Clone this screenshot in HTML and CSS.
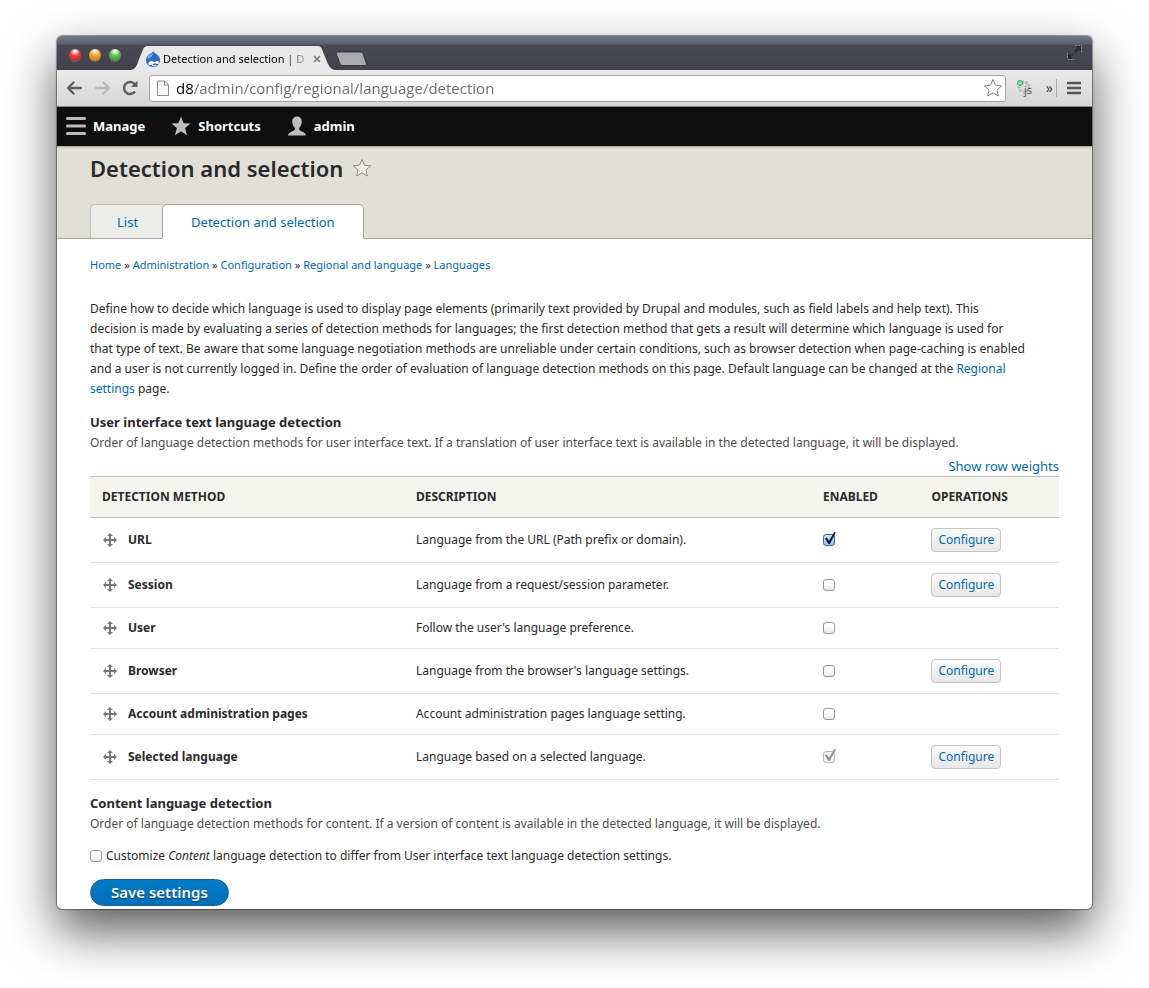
FILE: index.html
```html
<!DOCTYPE html>
<html lang="en">
<head>
  <meta charset="UTF-8">
  <title>Detection and selection | Drupal</title>
  <link rel="stylesheet" href="styles.css">
</head>
<body>
  <svg width="0" height="0" class="defs" aria-hidden="true">
    <symbol id="drag" viewBox="0 0 14 14">
      <path d="M7 0l3 3H8v3h3V4l3 3-3 3V8H8v3h2l-3 3-3-3h2V8H3v2L0 7l3-3v2h3V3H4z" fill="#787878"/>
    </symbol>
    <symbol id="star" viewBox="0 0 20 20">
      <path d="M10 1.500l2.500 5.700 6.200.6-4.700 4.100 1.400 6.100-5.400-3.200-5.400 3.200 1.400-6.100-4.700-4.100 6.200-.6z" stroke-linejoin="round"/>
    </symbol>
  </svg>

  <div class="window">
    <div class="titlebar">
      <div class="lights">
        <span class="light red"></span>
        <span class="light yellow"></span>
        <span class="light green"></span>
      </div>
      <div class="browser-tab">
        <svg class="tab-shape" viewBox="0 0 207 24" preserveAspectRatio="none">
          <path d="M0 24c4-1 6-4 7-8l5-12c1-3 3-4 5-4h172c3 0 4 1 5 4l5 12c2 4 3 7 8 8z" fill="#e9e9e9"/>
        </svg>
        <svg class="favicon" width="16" height="16" viewBox="0 0 16 16">
          <path d="M8 0c1 2 3 2.500 4.500 4C14.500 5.500 15 7.500 15 9.500 15 13 12 16 8 16S1 13 1 9.500C1 7 2 5 4 3.500 6 2.500 7.500 2 8 0z" fill="#2d6cc0"/>
          <path d="M3 5c2-2 4-1 5-3-.5 3-2 4-5 6z" fill="#86b4e8"/>
          <path d="M5 10.500c2.500-1.500 3.500 1 5 .5 2-1.500 4-1.500 4 .5s-2.500 2-4 .5c-1.500 1.500-5 3-6.500 1.500-.7-1 .5-2.400 1.500-3z" fill="#fff"/>
          <path d="M7 14.200c1.500.8 3 .8 4 0" stroke="#fff" fill="none"/>
        </svg>
        <span class="tab-title">Detection and selection | D</span>
        <button class="tab-close" aria-label="Close tab">
          <svg width="8" height="8" viewBox="0 0 8 8"><path d="M1 1l6 6M7 1L1 7" stroke="#777" stroke-width="1.500"/></svg>
        </button>
      </div>
      <svg class="new-tab" width="32" height="16" viewBox="0 0 32 16">
        <path d="M3 1h22c2 0 2.500.6 3.200 2l3 9c.5 1.600.2 2.500-1.500 2.500H8c-2 0-2.500-.8-3.200-2.300L1.500 3.400C1 2 1.500 1 3 1z" fill="#a9abb0" stroke="#34353d"/>
      </svg>
      <svg class="fullscreen" width="16" height="16" viewBox="0 0 16 16">
        <path d="M8 1h6v6l-2-2-3 3-2-2 3-3zM1 8l2 2 3-2 1 2-3 2 2 2H1z" fill="#2a2b33"/>
        <path d="M8 .5h7M14.500 2v6M1 14.500h7M.5 8v6" stroke="#8b8d97" stroke-dasharray="2 1"/>
      </svg>
    </div>

    <div class="toolbar">
      <button class="nav-btn" aria-label="Back">
        <svg width="17" height="14" viewBox="0 0 17 14"><path d="M7.500 1.500L2 7l5.500 5.500M2 7h13" stroke="#5f5f5f" stroke-width="2.300" stroke-linecap="round" stroke-linejoin="round" fill="none"/></svg>
      </button>
      <button class="nav-btn" aria-label="Forward">
        <svg width="17" height="14" viewBox="0 0 17 14"><path d="M9.500 1.500L15 7l-5.500 5.500M15 7H2" stroke="#b9b9b9" stroke-width="2.300" stroke-linecap="round" stroke-linejoin="round" fill="none"/></svg>
      </button>
      <button class="nav-btn" aria-label="Reload">
        <svg width="16" height="16" viewBox="0 0 16 16"><path d="M13 11.500A6 6 0 1 1 13 4.500" stroke="#5f5f5f" stroke-width="2.500" fill="none"/><path d="M15.500.5V7H9z" fill="#5f5f5f"/></svg>
      </button>
      <div class="omnibox">
        <svg width="12" height="16" viewBox="0 0 12 16"><path d="M.5 1h7l4 4v10.500H.5zM7.500 1v4h4" fill="#f6f6f6" stroke="#8d8d8d"/></svg>
        <input class="url" type="text" aria-label="Address" value="d8/admin/config/regional/language/detection">
        <svg class="bookmark" width="20" height="20"><use href="#star"/></svg>
      </div>
      <svg class="extension" width="18" height="18" viewBox="0 0 18 18">
        <circle cx="8" cy="8" r="5" fill="#dcdcdc" stroke="#b9b9b9" stroke-width="3" stroke-dasharray="2 1.500"/>
        <circle cx="4" cy="4" r="2.500" fill="#8be3a5" stroke="#1fb455"/>
        <text x="8" y="15">js</text>
      </svg>
      <span class="more">»</span>
      <span class="divider"></span>
      <button class="nav-btn" aria-label="Menu">
        <svg width="14" height="14" viewBox="0 0 14 14"><path d="M1 2h12M1 7h12M1 12h12" stroke="#555" stroke-width="2.600" stroke-linecap="round"/></svg>
      </button>
    </div>

    <nav class="admin-bar">
      <a href="#">
        <svg width="20" height="20" viewBox="0 0 20 20"><path d="M1.500 2.500h17M1.500 10h17M1.500 17.500h17" stroke="#bebebe" stroke-width="3" stroke-linecap="round"/></svg>
        Manage
      </a>
      <a href="#">
        <svg width="20" height="20" viewBox="0 0 20 20"><path d="M10 .5l2.600 6.800 6.900.3-5.400 4.500 1.900 7.200-6-4-6 4 1.900-7.200L.5 7.600l6.900-.3z" fill="#bebebe"/></svg>
        Shortcuts
      </a>
      <a href="#">
        <svg width="20" height="20" viewBox="0 0 20 20"><path d="M10 .5c3 0 4.800 2 4.800 5 0 2.500-1 4.500-2.300 6-.8 1.200-.5 2.500.8 3.200 2.500 1.200 5 1.600 5.700 4.800H1c.7-3.200 3.200-3.600 5.700-4.800 1.300-.7 1.600-2 .8-3.200-1.300-1.500-2.300-3.500-2.300-6 0-3 1.800-5 4.800-5z" fill="#bebebe"/></svg>
        admin
      </a>
    </nav>

    <header class="page-header">
      <div class="title-row">
        <h1>Detection and selection</h1>
        <svg class="shortcut-star" width="20" height="20"><use href="#star"/></svg>
      </div>
      <ul class="tabs">
        <li><a href="#">List</a></li>
        <li class="active"><a href="#">Detection and selection</a></li>
      </ul>
    </header>

    <main>
      <nav class="breadcrumb">
        <a href="#">Home</a> » <a href="#">Administration</a> » <a href="#">Configuration</a> » <a href="#">Regional and language</a> » <a href="#">Languages</a>
      </nav>

      <p class="help">Define how to decide which language is used to display page elements (primarily text provided by Drupal and modules, such as field labels and help text). This decision is made by evaluating a series of detection methods for languages; the first detection method that gets a result will determine which language is used for that type of text. Be aware that some language negotiation methods are unreliable under certain conditions, such as browser detection when page-caching is enabled and a user is not currently logged in. Define the order of evaluation of language detection methods on this page. Default language can be changed at the <a href="#">Regional settings</a> page.</p>

      <form>
        <h2>User interface text language detection</h2>
        <p class="description">Order of language detection methods for user interface text. If a translation of user interface text is available in the detected language, it will be displayed.</p>
        <div class="weights"><a href="#">Show row weights</a></div>

        <table>
          <thead>
            <tr>
              <th class="col-method">Detection method</th>
              <th class="col-desc">Description</th>
              <th class="col-enabled">Enabled</th>
              <th>Operations</th>
            </tr>
          </thead>
          <tbody>
            <tr>
              <td><label class="method" for="m-url"><svg width="14" height="14"><use href="#drag"/></svg>URL</label></td>
              <td>Language from the URL (Path prefix or domain).</td>
              <td><input type="checkbox" id="m-url" checked></td>
              <td><a class="configure" href="#">Configure</a></td>
            </tr>
            <tr>
              <td><label class="method" for="m-session"><svg width="14" height="14"><use href="#drag"/></svg>Session</label></td>
              <td>Language from a request/session parameter.</td>
              <td><input type="checkbox" id="m-session"></td>
              <td><a class="configure" href="#">Configure</a></td>
            </tr>
            <tr>
              <td><label class="method" for="m-user"><svg width="14" height="14"><use href="#drag"/></svg>User</label></td>
              <td>Follow the user's language preference.</td>
              <td><input type="checkbox" id="m-user"></td>
              <td></td>
            </tr>
            <tr>
              <td><label class="method" for="m-browser"><svg width="14" height="14"><use href="#drag"/></svg>Browser</label></td>
              <td>Language from the browser's language settings.</td>
              <td><input type="checkbox" id="m-browser"></td>
              <td><a class="configure" href="#">Configure</a></td>
            </tr>
            <tr>
              <td><label class="method" for="m-account"><svg width="14" height="14"><use href="#drag"/></svg>Account administration pages</label></td>
              <td>Account administration pages language setting.</td>
              <td><input type="checkbox" id="m-account"></td>
              <td></td>
            </tr>
            <tr>
              <td><label class="method" for="m-selected"><svg width="14" height="14"><use href="#drag"/></svg>Selected language</label></td>
              <td>Language based on a selected language.</td>
              <td><input type="checkbox" id="m-selected" checked disabled></td>
              <td><a class="configure" href="#">Configure</a></td>
            </tr>
          </tbody>
        </table>

        <h2>Content language detection</h2>
        <p class="description">Order of language detection methods for content. If a version of content is available in the detected language, it will be displayed.</p>
        <div class="customize">
          <input type="checkbox" id="customize">
          <label for="customize">Customize <em>Content</em> language detection to differ from User interface text language detection settings.</label>
        </div>
        <button class="save" type="button">Save settings</button>
      </form>
    </main>
  </div>
</body>
</html>
```

FILE: styles.css
```css
* {
  box-sizing: border-box;
}

body {
  margin: 0;
  padding: 36px 57px 78px;
  background: #fff;
  color: #2a2a2a;
  font-family: "Noto Sans", "Open Sans", sans-serif;
  font-size: 12px;
  line-height: 20px;
}

a {
  color: #0068b4;
  text-decoration: none;
}

button {
  font-family: inherit;
  border: none;
  background: none;
  padding: 0;
}

svg {
  display: block;
  flex: none;
}

.defs {
  position: absolute;
}

.window {
  border-radius: 5px;
  overflow: hidden;
  background: #fff;
  box-shadow: 0 0 1px 1px rgba(0,0,0,0.4), 0 22px 50px rgba(0,0,0,0.65);
}

/* browser chrome */
.titlebar {
  display: flex;
  align-items: flex-end;
  height: 34px;
  background: linear-gradient(#737789, #5b5e6d 8px, #484955 9px, #41424d);
}

.lights {
  display: flex;
  gap: 8px;
  align-self: center;
  padding: 4px 10px 0 12px;
}

.light {
  width: 12px;
  height: 12px;
  border-radius: 50%;
  box-shadow: 0 1px 0 #6a6c78;
}

.red {
  background: radial-gradient(circle at 50% 20%, #fff 5%, #ee3f45 40%, #b41a22);
}

.yellow {
  background: radial-gradient(circle at 50% 20%, #fff 5%, #f7a52c 40%, #c66a10);
}

.green {
  background: radial-gradient(circle at 50% 20%, #fff 5%, #61c453 40%, #2a8c2a);
}

.browser-tab {
  position: relative;
  display: flex;
  align-items: center;
  width: 204px;
  height: 24px;
  padding: 2px 12px 0 14px;
}

.tab-shape {
  position: absolute;
  inset: 0;
  width: 100%;
  height: 100%;
}

.favicon, .tab-title, .tab-close {
  position: relative;
}

.tab-title {
  flex: 1;
  margin-left: 2px;
  white-space: nowrap;
  font-size: 11px;
  color: #000;
  -webkit-mask-image: linear-gradient(to right, #000 120px, transparent 150px);
  mask-image: linear-gradient(to right, #000 120px, transparent 150px);
}

.tab-close {
  margin: 0 2px 0 6px;
}

.new-tab {
  margin-bottom: 3px;
}

.fullscreen {
  margin: 0 9px 0 auto;
  align-self: center;
}

.toolbar {
  display: flex;
  align-items: center;
  height: 37px;
  padding: 0 11px 0 9px;
  background: linear-gradient(#e9e9e9, #d6d6d6);
  border-bottom: 1px solid #8a8a8a;
}

.nav-btn {
  margin-right: 11px;
}

.nav-btn:last-child {
  margin-right: 0;
}

.omnibox {
  display: flex;
  flex: 1;
  align-items: center;
  height: 27px;
  padding: 0 2px 0 7px;
  background: #fff;
  border: 1px solid #a4a4a4;
  border-radius: 3px;
}

.url {
  flex: 1;
  min-width: 0;
  margin-left: 7px;
  padding: 0;
  border: none;
  outline: none;
  font-family: "Open Sans", "Noto Sans", sans-serif;
  font-size: 15px;
  /* host part dark, path grey */
  background: linear-gradient(to right, #000 18px, #6a6a6a 18px);
  -webkit-background-clip: text;
  background-clip: text;
  color: transparent;
}

.bookmark {
  fill: #fff;
  stroke: #858585;
}

.extension {
  margin-left: 10px;
}

.extension text {
  font-size: 11px;
  fill: #555;
}

.more {
  margin: 0 3px 0 12px;
  font-size: 14px;
  color: #444;
}

.divider {
  width: 1px;
  height: 18px;
  margin-right: 10px;
  background: #aaa;
}

/* drupal toolbar */
.admin-bar {
  display: flex;
  align-items: center;
  gap: 26px;
  height: 39px;
  padding: 0 9px 1px;
  background: #0f0f0f;
}

.admin-bar a {
  display: flex;
  align-items: center;
  gap: 7px;
  color: #fff;
  font-size: 13px;
  font-weight: bold;
}

.page-header {
  padding: 7px 33px 0;
  background: #e0e0d8;
  border-bottom: 1px solid #a6a6a6;
  box-shadow: inset 0 3px 2px -2px #a0a09a;
}

.title-row {
  display: flex;
  align-items: center;
  gap: 9px;
  height: 30px;
}

h1 {
  margin: 0;
  font-size: 22px;
  line-height: 30px;
  font-weight: 600;
}

.shortcut-star {
  fill: #f0f0ea;
  stroke: #8c8c7c;
}

.tabs {
  display: flex;
  margin: 21px 0 -1px;
  padding: 0;
  list-style: none;
}

.tabs li {
  height: 35px;
  padding: 7px 25px 7px 26px;
  border: 1px solid #bebeb8;
  border-right: none;
  border-bottom-color: #a6a6a6;
  border-radius: 5px 0 0 0;
  background: #ecede8;
  font-size: 13px;
}

.tabs .active {
  margin-left: -1px;
  padding: 7px 28px;
  border: 1px solid #a6a6a6;
  border-bottom-color: #fff;
  border-radius: 5px 5px 0 0;
  background: #fff;
}

main {
  padding: 16px 33px 3px;
}

.breadcrumb {
  font-size: 11px;
}

.help {
  margin: 24px 0 13px;
  padding-right: 32px;
}

h2 {
  margin: 13px 0 1px;
  font-size: 13px;
  line-height: 20px;
  font-weight: bold;
}

.description {
  margin: 0 0 3px;
  color: #4c4c4c;
}

.weights {
  text-align: right;
  font-size: 13px;
}

table {
  width: 100%;
  table-layout: fixed;
  border-spacing: 0;
}

th {
  padding: 10px 12px;
  background: #f5f5f0;
  border-top: 1px solid #bebfb9;
  border-bottom: 1px solid #bebfb9;
  font-weight: bold;
  text-align: left;
  text-transform: uppercase;
}

td {
  padding: 10px 12px;
  border-bottom: 1px solid #e3e3dd;
}

.col-method {
  width: 32.4%;
}

.col-desc {
  width: 42%;
}

.col-enabled {
  width: 11.2%;
}

.method {
  display: flex;
  align-items: center;
  gap: 11px;
  padding-left: 1px;
  font-weight: bold;
}

input[type="checkbox"] {
  position: relative;
  display: block;
  flex: none;
  appearance: none;
  width: 12px;
  height: 12px;
  margin: 0;
  border: 1px solid #999;
  border-radius: 3px;
  background: linear-gradient(#fff 40%, #e6e6e6);
}

input[type="checkbox"]:checked {
  border-color: #46639c;
  background: linear-gradient(#d3e6fa, #8bc0f2);
}

input[type="checkbox"]:checked::after {
  content: "";
  position: absolute;
  left: 1px;
  top: -3px;
  width: 11px;
  height: 12px;
  background: #0b1428;
  clip-path: polygon(0 52%, 16% 46%, 38% 72%, 84% 0, 100% 4%, 44% 100%, 32% 100%);
}

input[type="checkbox"]:disabled {
  border-color: #bbb;
  background: #f3f3f3;
}

input[type="checkbox"]:disabled::after {
  background: #8f8f8f;
}

.configure {
  display: block;
  width: fit-content;
  padding: 1px 6px;
  border: 1px solid #c4c4c4;
  border-radius: 4px;
  background: linear-gradient(#fbfbfb, #e7e7e7);
}

.customize {
  display: flex;
  align-items: center;
  gap: 4px;
  margin: 12px 0 13px;
}

.save {
  display: block;
  height: 27px;
  padding: 0 20px;
  border: 1px solid #1e5c90;
  border-radius: 14px;
  background: linear-gradient(#007bc6, #0071b8);
  color: #fff;
  font-size: 15px;
  line-height: 25px;
  font-weight: 600;
  text-shadow: 0 1px 1px rgba(0,0,0,0.5);
}
```
